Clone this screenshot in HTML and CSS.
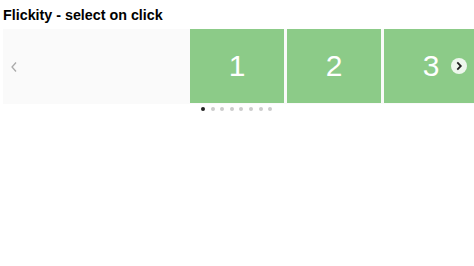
FILE: index.html
```html
<!DOCTYPE html>
<html>
<head>
<meta charset="utf-8">
<link rel="stylesheet" href="styles.css">
</head>
<body>
<h1 class="title">Flickity - select on click</h1>
<div class="carousel">
  <div class="viewport">
    <div class="cell">1</div>
    <div class="cell">2</div>
    <div class="cell">3</div>
  </div>
  <button class="prev" aria-label="previous">
    <svg viewBox="0 0 10 12" width="10" height="12"><path d="M7 1.5 L3 6 L7 10.5" fill="none" stroke="#aaa" stroke-width="1.3"/></svg>
  </button>
  <button class="next" aria-label="next">
    <svg viewBox="0 0 16 16" width="16" height="16"><path d="M6.3 4.4 L9.8 8 L6.3 11.6" fill="none" stroke="#222" stroke-width="1.8"/></svg>
  </button>
</div>
<div class="dots">
  <span class="dot active"></span><span class="dot"></span><span class="dot"></span><span class="dot"></span><span class="dot"></span><span class="dot"></span><span class="dot"></span><span class="dot"></span>
</div>
</body>
</html>
```
FILE: styles.css
```css
html, body { margin: 0; padding: 0; background: #fff; }
body { font-family: "Liberation Sans", Arial, sans-serif; padding: 0 0 0 3px; }
.title { font-size: 14.3px; font-weight: bold; margin: 0; padding-top: 7px; line-height: 16px; height: 22px; color: #000; }
.carousel { position: relative; background: #fafafa; height: 75px; overflow: hidden; }
.viewport { display: flex; gap: 3px; padding-left: 187px; height: 100%; }
.cell { flex: 0 0 94px; height: 74px; background: #8ccb88; color: #fff; font-size: 30px; display: flex; align-items: center; justify-content: center; }
.prev { position: absolute; left: 5px; top: 31px; width: 12px; height: 14px; padding: 0; border: 0; background: transparent; display: flex; align-items: center; justify-content: center; }
.next { position: absolute; left: 448px; top: 29px; width: 16px; height: 16px; border-radius: 50%; padding: 0; border: 0; background: rgba(255,255,255,0.85); display: flex; align-items: center; justify-content: center; }
.dots { display: flex; gap: 5.6px; padding-left: 198px; margin-top: 3px; }
.dot { width: 4px; height: 4px; border-radius: 50%; background: #ccc; }
.dot.active { background: #222; }
```
